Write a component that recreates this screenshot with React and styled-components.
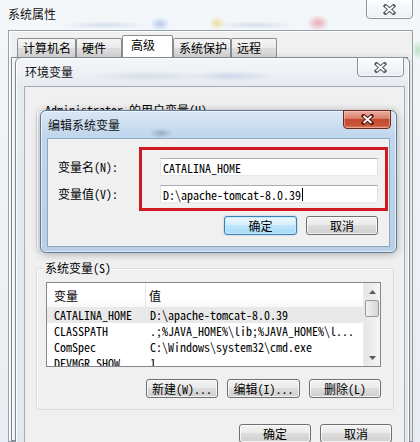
import styled, { createGlobalStyle, css } from 'styled-components';

const MONO = `"Noto Sans Mono CJK SC", "Liberation Mono", "Noto Sans CJK SC", monospace`;
const UI = `"Noto Sans CJK SC", "Liberation Sans", sans-serif`;

const GlobalStyle = createGlobalStyle`
  * { box-sizing: border-box; }
  html, body { margin: 0; padding: 0; }
  body {
    width: 420px;
    height: 442px;
    overflow: hidden;
    background: #eaeff5;
    font-family: ${UI};
    font-size: 12px;
    color: #000;
  }
`;

const TABS = [
  { label: '计算机名', width: 59 },
  { label: '硬件', width: 46 },
  { label: '高级', width: 51, active: true },
  { label: '系统保护', width: 58 },
  { label: '远程', width: 46 },
];

const SYSTEM_VARS = [
  { name: 'CATALINA_HOME', value: 'D:\\apache-tomcat-8.0.39', selected: true },
  { name: 'CLASSPATH', value: '.;%JAVA_HOME%\\lib;%JAVA_HOME%\\l...' },
  { name: 'ComSpec', value: 'C:\\Windows\\system32\\cmd.exe' },
  { name: 'DEVMGR_SHOW', value: '1' },
];

const XGlyph = ({ active }) => (
  <svg width="13" height="11" viewBox="0 0 13 11">
    <path
      d="M2.5 2 L10.5 9 M10.5 2 L2.5 9"
      stroke={active ? '#4c150b' : '#50565d'}
      strokeWidth="3.8"
      strokeLinecap="square"
    />
    <path d="M2.5 2 L10.5 9 M10.5 2 L2.5 9" stroke="#fff" strokeWidth="1.7" />
  </svg>
);

const Arrow = ({ down }) => (
  <svg width="7" height="4" viewBox="0 0 7 4">
    <path d={down ? 'M0 0 H7 L3.5 4 Z' : 'M0 4 H7 L3.5 0 Z'} fill="#5b5b5b" />
  </svg>
);

export default function App() {
  return (
    <>
      <GlobalStyle />
      <Screen>
        <SysWindow>
          <SysTitleBar>
            <WindowTitle>系统属性</WindowTitle>
            <CloseButton $top={-1} $right={7} $width={47} $height={20}>
              <XGlyph />
            </CloseButton>
          </SysTitleBar>
          <SysClient>
            <TabStrip>
              {TABS.map((tab) => (
                <Tab key={tab.label} $active={tab.active} $width={tab.width}>
                  {tab.label}
                </Tab>
              ))}
            </TabStrip>
            <TabPage />
          </SysClient>
        </SysWindow>

        <EnvWindow>
          <EnvTitleBar>
            <WindowTitle>环境变量</WindowTitle>
            <CloseButton $top={-1} $right={5} $width={47} $height={20}>
              <XGlyph />
            </CloseButton>
          </EnvTitleBar>
          <EnvClient>
            <GroupBox $height={150} $gap={15}>
              <GroupLabel>Administrator 的用户变量(U)</GroupLabel>
            </GroupBox>
            <GroupBox $gap={8}>
              <GroupLabel>系统变量(S)</GroupLabel>
              <ListBox>
                <ListBody>
                  <ListHeader>
                    <HeaderCell $divider>变量</HeaderCell>
                    <HeaderCell>值</HeaderCell>
                  </ListHeader>
                  {SYSTEM_VARS.map((v) => (
                    <ListRow key={v.name} $selected={v.selected}>
                      <RowCell>{v.name}</RowCell>
                      <RowCell $value>{v.value}</RowCell>
                    </ListRow>
                  ))}
                </ListBody>
                <ScrollBar>
                  <ScrollButton>
                    <Arrow />
                  </ScrollButton>
                  <ScrollThumb />
                  <ScrollTrack />
                  <ScrollButton>
                    <Arrow down />
                  </ScrollButton>
                </ScrollBar>
              </ListBox>
              <ButtonRow $top={12}>
                <Button>新建(W)...</Button>
                <Button $width={73}>编辑(I)...</Button>
                <Button>删除(L)</Button>
              </ButtonRow>
            </GroupBox>
            <ButtonRow $top={14} $right={2}>
              <Button>确定</Button>
              <Button>取消</Button>
            </ButtonRow>
          </EnvClient>
        </EnvWindow>

        <EditDialog>
          <EditTitleBar>
            <WindowTitle>编辑系统变量</WindowTitle>
            <CloseButton $active $top={-1} $right={5} $width={48} $height={19}>
              <XGlyph active />
            </CloseButton>
          </EditTitleBar>
          <EditClient>
            <FormGrid>
              <FieldLabel>变量名(N):</FieldLabel>
              <TextField>CATALINA_HOME</TextField>
              <FieldLabel>变量值(V):</FieldLabel>
              <TextField>
                D:\apache-tomcat-8.0.39
                <Caret />
              </TextField>
            </FormGrid>
            <ButtonRow $top={13} $right={11}>
              <Button $default $width={73}>
                确定
              </Button>
              <Button>取消</Button>
            </ButtonRow>
            <Highlight />
          </EditClient>
        </EditDialog>
      </Screen>
    </>
  );
}

const Screen = styled.div`
  position: relative;
  width: 420px;
  height: 442px;
  overflow: hidden;
  background:
    radial-gradient(10px 7px at 160px 24px, rgba(70, 110, 220, 0.35), transparent),
    radial-gradient(8px 7px at 217px 23px, rgba(235, 190, 40, 0.45), transparent),
    radial-gradient(11px 8px at 318px 23px, rgba(220, 60, 80, 0.4), transparent),
    radial-gradient(45px 4px at 105px 25px, rgba(110, 140, 190, 0.22), transparent),
    radial-gradient(40px 4px at 255px 25px, rgba(110, 140, 190, 0.22), transparent),
    radial-gradient(6px 10px at 418px 50px, rgba(80, 180, 90, 0.35), transparent),
    linear-gradient(#f4f7fa, #e8edf3);
`;

const SysWindow = styled.div`
  display: flex;
  flex-direction: column;
  height: 100%;
`;

const SysTitleBar = styled.div`
  position: relative;
  display: flex;
  align-items: center;
  height: 30px;
  padding: 0 0 2px 8px;
`;

const WindowTitle = styled.span`
  font-family: ${UI};
  font-size: 12px;
  line-height: 14px;
  color: #111;
`;

const CloseButton = styled.div`
  position: absolute;
  top: ${({ $top }) => $top}px;
  right: ${({ $right }) => $right}px;
  width: ${({ $width }) => $width}px;
  height: ${({ $height }) => $height}px;
  display: flex;
  align-items: center;
  justify-content: center;
  border: 1px solid #8a929b;
  border-radius: 0 0 4px 4px;
  background: linear-gradient(rgba(255, 255, 255, 0.75), rgba(232, 237, 243, 0.75));
  box-shadow: inset 0 0 0 1px rgba(255, 255, 255, 0.7);

  ${({ $active }) =>
    $active &&
    css`
      border-color: #6a2a1c;
      background: linear-gradient(#eab1a3, #d97c66 45%, #c34a30 50%, #c9553a 85%, #de8a6f);
      box-shadow: inset 0 0 0 1px rgba(255, 210, 200, 0.45);
    `}
`;

const SysClient = styled.div`
  flex: 1;
  display: flex;
  flex-direction: column;
  margin: 0 7px 0 8px;
  border: 1px solid #98a1ab;
  background: #f0f0f0;
  box-shadow: inset 1px 1px 0 #fff;
`;

const TabStrip = styled.div`
  display: flex;
  align-items: flex-end;
  height: 26px;
  padding-left: 8px;
`;

const Tab = styled.div`
  width: ${({ $width }) => $width}px;
  height: 19px;
  padding: 1px 0 0 5px;
  border: 1px solid #898c95;
  border-bottom: none;
  border-radius: 2px 2px 0 0;
  background: linear-gradient(#f6f6f6, #e9e9e9 50%, #dcdcdc 51%, #d6d6d6);
  font-size: 12px;
  line-height: 16px;
  white-space: nowrap;

  ${({ $active }) =>
    $active &&
    css`
      height: 22px;
      padding: 1px 0 0 8px;
      background: #fff;
      position: relative;
      z-index: 1;
    `}
`;

const TabPage = styled.div`
  flex: 1;
  margin: 0 4px 0 2px;
  border: 1px solid #898c95;
  background: #fcfcfc;
`;

const EnvWindow = styled.div`
  position: absolute;
  left: 15px;
  top: 57px;
  width: 395px;
  height: 420px;
  display: flex;
  flex-direction: column;
  border: 1px solid #7f8891;
  border-radius: 6px 6px 0 0;
  background:
    radial-gradient(60px 5px at 130px 18px, rgba(120, 140, 180, 0.18), transparent),
    radial-gradient(45px 5px at 215px 18px, rgba(90, 120, 190, 0.2), transparent),
    linear-gradient(#f4f6f9, #e6ebf0 30px, #e3e8ed);
  box-shadow: inset 0 0 0 1px rgba(255, 255, 255, 0.85), 0 0 6px rgba(0, 0, 0, 0.12);
`;

const EnvTitleBar = styled.div`
  position: relative;
  display: flex;
  align-items: center;
  height: 28px;
  padding: 0 0 0 9px;
`;

const EnvClient = styled.div`
  flex: 1;
  display: flex;
  flex-direction: column;
  margin: 0 4px 0 8px;
  padding: 0 10px 0 11px;
  border: 1px solid #a2adb9;
  background: #f0f0f0;
`;

const GroupBox = styled.fieldset`
  margin: ${({ $gap }) => $gap}px 0 0;
  padding: 6px 12px 11px 9px;
  min-width: 0;
  height: ${({ $height }) => ($height ? `${$height}px` : 'auto')};
  border: 1px solid #d5dfe5;
  border-radius: 3px;
  box-shadow: inset 1px 1px 0 #fff;
`;

const GroupLabel = styled.legend`
  margin-left: -3px;
  padding: 0 2px;
  font-family: ${MONO};
  font-size: 12px;
  line-height: 16px;
  white-space: nowrap;
`;

const ListBox = styled.div`
  display: flex;
  height: 85px;
  border: 1px solid #828790;
  background: #fff;
  overflow: hidden;
`;

const ListBody = styled.div`
  flex: 1;
  min-width: 0;
`;

const ListHeader = styled.div`
  display: grid;
  grid-template-columns: 99px 1fr;
  height: 24px;
  background: linear-gradient(#fff, #fff 60%, #f7f8fa);
`;

const HeaderCell = styled.div`
  display: flex;
  align-items: center;
  padding-left: ${({ $divider }) => ($divider ? 7 : 3)}px;
  border-right: ${({ $divider }) => ($divider ? '1px solid #e5e5e5' : 'none')};
  font-size: 12px;
`;

const ListRow = styled.div`
  display: grid;
  grid-template-columns: 99px 1fr;
  height: 16px;
  background: ${({ $selected }) => ($selected ? '#e9e9e9' : 'transparent')};
`;

const RowCell = styled.div`
  padding-left: ${({ $value }) => ($value ? 4 : 7)}px;
  font-family: ${MONO};
  font-size: 12px;
  line-height: 16px;
  white-space: nowrap;
  overflow: hidden;
`;

const ScrollBar = styled.div`
  display: flex;
  flex-direction: column;
  width: 17px;
  border-left: 1px solid #ececec;
  background: linear-gradient(90deg, #e6e6e6, #f5f5f5);
`;

const ScrollButton = styled.div`
  display: flex;
  align-items: center;
  justify-content: center;
  height: 17px;
`;

const ScrollThumb = styled.div`
  height: 17px;
  margin: 0 1px;
  border: 1px solid #979797;
  border-radius: 2px;
  background: linear-gradient(90deg, #f3f3f3, #e2e2e2 50%, #d6d6d6);
`;

const ScrollTrack = styled.div`
  flex: 1;
`;

const ButtonRow = styled.div`
  display: flex;
  justify-content: flex-end;
  gap: 9px;
  margin-top: ${({ $top }) => $top}px;
  padding-right: ${({ $right }) => $right || 0}px;
`;

const Button = styled.button`
  width: ${({ $width }) => $width || 72}px;
  height: 19px;
  padding: 0;
  border: 1px solid #707070;
  border-radius: 3px;
  background: linear-gradient(#f2f2f2, #ebebeb 45%, #dddddd 50%, #cfcfcf);
  box-shadow: inset 0 0 0 1px rgba(255, 255, 255, 0.75);
  font-family: ${MONO};
  font-size: 12px;
  line-height: 16px;
  color: #000;

  ${({ $default }) =>
    $default &&
    css`
      border-color: #3c7fb1;
      background: linear-gradient(#eaf6fd, #d9f0fc 45%, #bee6fd 50%, #a7d9f5);
      box-shadow: inset 0 0 0 1px #c6e9fb, 0 0 2px rgba(60, 127, 177, 0.45);
    `}
`;

const EditDialog = styled.div`
  position: absolute;
  left: 40px;
  top: 110px;
  width: 357px;
  height: 143px;
  display: flex;
  flex-direction: column;
  border: 1px solid #5c7a99;
  border-radius: 6px;
  background:
    radial-gradient(12px 5px at 120px 22px, rgba(50, 70, 100, 0.3), transparent),
    linear-gradient(#dae7f4, #c0d6ec 26px, #b8cfe7);
  box-shadow: inset 0 0 0 1px rgba(255, 255, 255, 0.6), 0 1px 8px rgba(0, 0, 0, 0.3);
`;

const EditTitleBar = styled.div`
  position: relative;
  display: flex;
  align-items: center;
  height: 27px;
  padding-left: 7px;
`;

const EditClient = styled.div`
  position: relative;
  flex: 1;
  margin: 0 6px 5px;
  border: 1px solid #8ea7bf;
  background: #f0f0f0;
`;

const FormGrid = styled.div`
  display: grid;
  grid-template-columns: 102px 218px;
  grid-auto-rows: 18px;
  row-gap: 9px;
  padding: 19px 0 0 10px;
  align-items: center;
`;

const FieldLabel = styled.div`
  font-family: ${MONO};
  font-size: 12px;
  line-height: 16px;
  white-space: nowrap;
`;

const TextField = styled.div`
  display: flex;
  align-items: center;
  height: 18px;
  padding-left: 2px;
  border: 1px solid;
  border-color: #abadb3 #dbdfe6 #e3e9ef #e2e3ea;
  background: #fff;
  font-family: ${MONO};
  font-size: 12px;
  white-space: nowrap;
`;

const Caret = styled.span`
  display: inline-block;
  width: 1px;
  height: 13px;
  margin-left: 1px;
  background: #000;
`;

const Highlight = styled.div`
  position: absolute;
  left: 91px;
  top: 8px;
  width: 249px;
  height: 64px;
  border: 3px solid #cf1a21;
  pointer-events: none;
`;
